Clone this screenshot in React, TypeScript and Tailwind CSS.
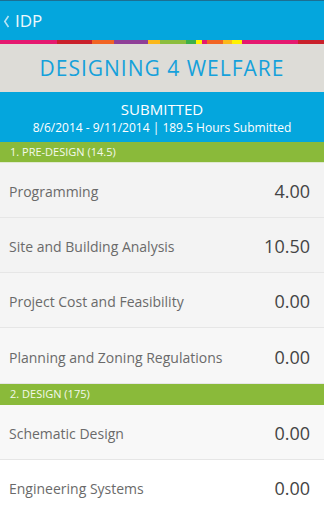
import React from "react";

const stripe: [number, string][] = [
  [57, "#e5196f"],
  [35, "#c9202b"],
  [22, "#f16423"],
  [34, "#8f3f97"],
  [12, "#fbb81a"],
  [26, "#8cbd3d"],
  [10, "#3cb04a"],
  [6, "#fff200"],
  [5, "#e5196f"],
  [16, "#f16423"],
  [9, "#fbb81a"],
  [10, "#fff200"],
  [56, "#e5196f"],
  [26, "#c9202b"],
];

const Row = ({ label, value, bg, h = "h-[55px]" }: { label: string; value: string; bg: string; h?: string }) => (
  <div className={`flex ${h} shrink-0 items-center justify-between border-b border-[#e6e6e6] pl-[9px] pr-[14px] pt-[3px] ${bg}`}>
    <span className="text-[14px] text-[#6a6a6a]">{label}</span>
    <span className="text-[18px] text-[#444444]">{value}</span>
  </div>
);

export default function App() {
  return (
    <div
      className="flex h-[512px] w-[324px] flex-col overflow-hidden bg-white"
      style={{ fontFamily: '"Open Sans", "Noto Sans", sans-serif' }}
    >
      <div className="flex h-[40px] shrink-0 items-center gap-[5px] border-t border-[#1b6f93] bg-[#04a6dd] pl-[3px]">
        <svg width="7" height="13" viewBox="0 0 7 13" className="mt-[1px]">
          <path d="M5.5 1 L1.8 6.5 L5.5 12" stroke="#b5e3f4" strokeWidth="1.6" fill="none" />
        </svg>
        <span className="text-[17px] leading-none text-[#eef8fc]">IDP</span>
      </div>
      <div className="flex h-[4px] shrink-0">
        {stripe.map(([w, c], i) => (
          <div key={i} className="h-full" style={{ width: w, backgroundColor: c }} />
        ))}
      </div>
      <div className="flex h-[48px] shrink-0 items-center justify-center bg-[#dddcd7] pt-[1px]">
        <span className="text-[21px] font-medium tracking-[1px] text-[#15a1db]">DESIGNING 4 WELFARE</span>
      </div>
      <div className="flex h-[50px] shrink-0 flex-col items-center justify-center bg-[#04a6dd] text-white">
        <span className="text-[15px] leading-[20px]">SUBMITTED</span>
        <span className="text-[12px] leading-[17px]">8/6/2014 - 9/11/2014 | 189.5 Hours Submitted</span>
      </div>
      <div className="flex h-[21px] shrink-0 items-center border-b border-[#dfe9cf] bg-[#8aba3a] pl-[10px] text-[11px] text-[#f4f9ec]">
        1. PRE-DESIGN (14.5)
      </div>
      <Row label="Programming" value="4.00" bg="bg-[#f3f3f3]" />
      <Row label="Site and Building Analysis" value="10.50" bg="bg-[#f3f3f3]" />
      <Row label="Project Cost and Feasibility" value="0.00" bg="bg-[#f5f5f5]" />
      <Row label="Planning and Zoning Regulations" value="0.00" bg="bg-[#f7f7f7]" h="h-[56px]" />
      <div className="flex h-[21px] shrink-0 items-center bg-[#8aba3a] pl-[10px] text-[11px] text-[#f4f9ec]">
        2. DESIGN (175)
      </div>
      <Row label="Schematic Design" value="0.00" bg="bg-[#f8f8f8]" />
      <Row label="Engineering Systems" value="0.00" bg="bg-white" />
    </div>
  );
}
